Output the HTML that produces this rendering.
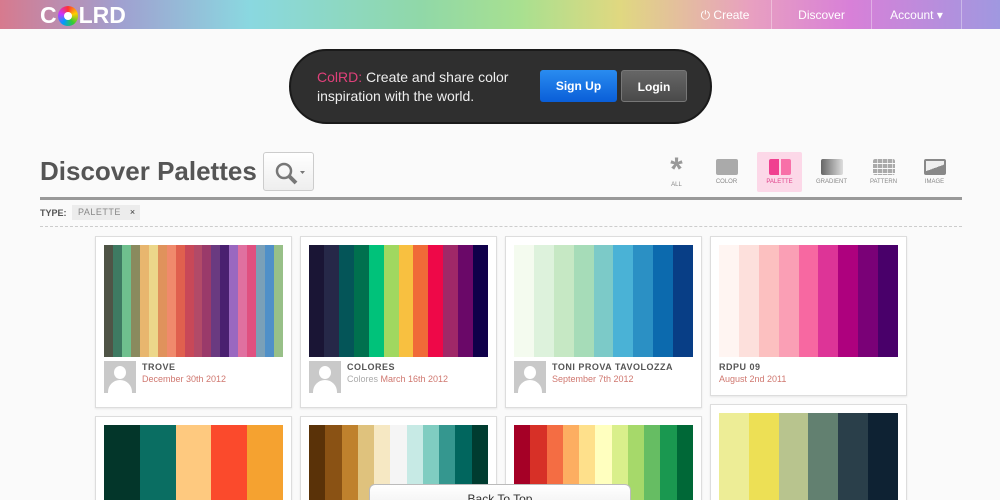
<!DOCTYPE html>
<html><head><meta charset="utf-8"><style>
*{margin:0;padding:0;box-sizing:border-box}
html,body{width:1000px;height:500px;overflow:hidden}
body{background:#fafafa;font-family:"Liberation Sans",sans-serif;position:relative}
.hdr{position:absolute;left:0;top:0;width:1000px;height:29px;background:linear-gradient(90deg,#d77a8e 0%,#a0a0d0 12%,#8ad8e0 25%,#90d8a8 42%,#a8e090 52%,#e0d880 62%,#e8a0c0 75%,#d880d8 85%,#a098e0 100%)}
.hdr .nav{position:absolute;top:0;height:29px;line-height:31px;color:#fff;font-size:12px;text-align:center;border-left:1px solid rgba(255,255,255,.35)}
.logo{position:absolute;left:40px;top:2px;color:#fff;font-weight:bold;font-size:23px;letter-spacing:0}
.banner{position:absolute;left:289px;top:49px;width:423px;height:75px;border-radius:38px;background:#2f2f2f;border:2px solid #1a1a1a}
.banner .t{position:absolute;left:26px;top:17px;color:#eee;font-size:14px;line-height:19px}
.btn{position:absolute;top:19px;height:32px;border-radius:3px;color:#fff;font-weight:bold;font-size:12px;text-align:center;line-height:32px}
h1{position:absolute;left:40px;top:156px;font-size:26px;color:#555;font-weight:bold}
.search{position:absolute;left:263px;top:152px;width:51px;height:39px;border:1px solid #ccc;border-radius:3px;background:linear-gradient(#fff,#eee)}
.rule{position:absolute;left:40px;top:197px;width:922px;height:3px;background:#999}
.dash{position:absolute;left:40px;top:226px;width:922px;border-top:1px dashed #ccc}
.ic{position:absolute;top:152px;width:45px;height:40px;font-size:6px;color:#888;text-align:center}
.ic .g{width:22px;height:16px;margin:7px auto 4px;border-radius:2px}
.card{position:absolute;width:197px;background:#fff;border:1px solid #ddd;box-shadow:0 1px 2px rgba(0,0,0,.08)}
.sw{position:absolute;left:8px;top:8px;width:179px;height:112px;display:flex}
.sw i{flex:1}
.av{position:absolute;left:8px;top:124px;width:32px;height:32px;background:#c9c9c9;overflow:hidden}
.av:before{content:"";position:absolute;left:10px;top:5px;width:12px;height:13px;border-radius:50%;background:#fff}
.av:after{content:"";position:absolute;left:4px;top:19px;width:24px;height:20px;border-radius:12px 12px 0 0;background:#fff}
.nm{position:absolute;left:46px;top:125px;font-size:9px;font-weight:bold;color:#555;letter-spacing:.5px}
.dt{position:absolute;left:46px;top:137px;font-size:9px;color:#d07870}
</style></head><body>
<div class="hdr">
<div class="logo">C<span style="display:inline-block;width:20px;height:20px;border-radius:50%;background:conic-gradient(#f33,#fc0,#3c3,#09f,#c3f,#f33);vertical-align:-3px;position:relative;margin:0 1px"><span style="position:absolute;left:6px;top:6px;width:8px;height:8px;border-radius:50%;background:#fff"></span></span>LRD</div>
<div class="nav" style="left:680px;width:90px;border-left:none">⏻ Create</div>
<div class="nav" style="left:771px;width:100px">Discover</div>
<div class="nav" style="left:871px;width:91px;border-right:1px solid rgba(255,255,255,.35)">Account ▾</div>
</div>
<div class="banner">
<div class="t"><span style="color:#e0407a">ColRD:</span> Create and share color<br>inspiration with the world.</div>
<div class="btn" style="left:249px;width:77px;background:linear-gradient(#2a8cf0,#0a5ed8)">Sign Up</div>
<div class="btn" style="left:330px;width:66px;background:linear-gradient(#666,#4a4a4a);border:1px solid #777">Login</div>
</div>
<h1>Discover Palettes</h1>
<div class="search"><svg width="51" height="39"><circle cx="20" cy="18" r="7" stroke="#777" stroke-width="2.5" fill="none"/><line x1="25" y1="23" x2="32" y2="30" stroke="#777" stroke-width="4"/><path d="M36 18h5l-2.5 3z" fill="#777"/></svg></div>
<div class="ic" style="left:654px"><div style="font-size:32px;color:#999;line-height:26px;margin-top:4px;font-weight:bold">*</div>ALL</div>
<div class="ic" style="left:704px"><div class="g" style="background:#aaa"></div>COLOR</div>
<div class="ic" style="left:757px;background:#fcd8e8;color:#e0408a;border-radius:2px"><div class="g" style="background:linear-gradient(90deg,#f04090 45%,#fcd8e8 45% 55%,#f870a8 55%)"></div>PALETTE</div>
<div class="ic" style="left:809px"><div class="g" style="background:linear-gradient(90deg,#666,#ddd)"></div>GRADIENT</div>
<div class="ic" style="left:861px"><div class="g" style="background:repeating-linear-gradient(90deg,#aaa 0 4px,#ddd 4px 5px),#aaa;-webkit-mask:repeating-linear-gradient(#000 0 4px,transparent 4px 5px)"></div>PATTERN</div>
<div class="ic" style="left:912px"><div class="g" style="border:2px solid #888;background:linear-gradient(160deg,#eee 55%,#888 55%)"></div>IMAGE</div>
<div class="rule"></div>
<div style="position:absolute;left:40px;top:208px;font-size:9px;font-weight:bold;color:#555">TYPE:</div>
<div style="position:absolute;left:72px;top:205px;width:68px;height:15px;background:#ececec;font-size:9px;color:#888;line-height:15px;padding-left:6px;letter-spacing:.5px">PALETTE <span style="color:#333;margin-left:6px">×</span></div>
<div class="dash"></div>

<div class="card" style="left:95px;top:236px;height:172px"><div class="sw"><i style="background:#4f5446"></i><i style="background:#3e7a62"></i><i style="background:#6fc08e"></i><i style="background:#8a8a5e"></i><i style="background:#e8b66e"></i><i style="background:#ecd78a"></i><i style="background:#e0925c"></i><i style="background:#f08a6c"></i><i style="background:#e0604e"></i><i style="background:#c84858"></i><i style="background:#b24a68"></i><i style="background:#9a3a6a"></i><i style="background:#6a3a80"></i><i style="background:#4a2070"></i><i style="background:#9a68c0"></i><i style="background:#e070a0"></i><i style="background:#e05080"></i><i style="background:#7aa0b8"></i><i style="background:#5090c8"></i><i style="background:#98c088"></i></div><div class="av"></div><div class="nm">TROVE</div><div class="dt">December 30th 2012</div></div>
<div class="card" style="left:300px;top:236px;height:172px"><div class="sw"><i style="background:#1a1535"></i><i style="background:#262848"></i><i style="background:#045558"></i><i style="background:#00704e"></i><i style="background:#00c27a"></i><i style="background:#a0d860"></i><i style="background:#f8c040"></i><i style="background:#f06a38"></i><i style="background:#ee0848"></i><i style="background:#a02868"></i><i style="background:#6a0868"></i><i style="background:#10004a"></i></div><div class="av"></div><div class="nm">COLORES</div><div class="dt"><span style="color:#aaa">Colores</span> March 16th 2012</div></div>
<div class="card" style="left:505px;top:236px;height:172px"><div class="sw"><i style="background:#f4fbef"></i><i style="background:#ddf2dc"></i><i style="background:#c6e8c4"></i><i style="background:#a6dcb8"></i><i style="background:#7ccac8"></i><i style="background:#4ab2d6"></i><i style="background:#2b90c4"></i><i style="background:#0c6aae"></i><i style="background:#083e86"></i></div><div class="av"></div><div class="nm">TONI PROVA TAVOLOZZA</div><div class="dt">September 7th 2012</div></div>
<div class="card" style="left:710px;top:236px;height:160px"><div class="sw"><i style="background:#fff5f2"></i><i style="background:#fde0dc"></i><i style="background:#fcc0c0"></i><i style="background:#fa9fb5"></i><i style="background:#f768a1"></i><i style="background:#dd3497"></i><i style="background:#ae017e"></i><i style="background:#7a0177"></i><i style="background:#49006a"></i></div><div class="nm" style="left:8px">RDPU 09</div><div class="dt" style="left:8px">August 2nd 2011</div></div>

<div class="card" style="left:95px;top:416px;height:120px"><div class="sw"><i style="background:#03362a"></i><i style="background:#0a6e62"></i><i style="background:#fec97f"></i><i style="background:#fb4a2c"></i><i style="background:#f5a230"></i></div></div>
<div class="card" style="left:300px;top:416px;height:120px"><div class="sw"><i style="background:#5a3208"></i><i style="background:#8a5214"></i><i style="background:#bf812d"></i><i style="background:#dfc27d"></i><i style="background:#f6e8c3"></i><i style="background:#f5f5f5"></i><i style="background:#c7eae5"></i><i style="background:#80cdc1"></i><i style="background:#35978f"></i><i style="background:#01665e"></i><i style="background:#003c30"></i></div></div>
<div class="card" style="left:505px;top:416px;height:120px"><div class="sw"><i style="background:#a50026"></i><i style="background:#d73027"></i><i style="background:#f46d43"></i><i style="background:#fdae61"></i><i style="background:#fee08b"></i><i style="background:#ffffbf"></i><i style="background:#d9ef8b"></i><i style="background:#a6d96a"></i><i style="background:#66bd63"></i><i style="background:#1a9850"></i><i style="background:#006837"></i></div></div>
<div class="card" style="left:710px;top:404px;height:120px"><div class="sw"><i style="background:#eded96"></i><i style="background:#ede055"></i><i style="background:#b8c48e"></i><i style="background:#628070"></i><i style="background:#2a3f4a"></i><i style="background:#0e2233"></i></div></div>

<div style="position:absolute;left:369px;top:484px;width:262px;height:30px;background:linear-gradient(#fff,#eee);border:1px solid #bbb;border-radius:6px;text-align:center;font-size:12px;color:#333;padding-top:7px">Back To Top</div>
</body></html>
